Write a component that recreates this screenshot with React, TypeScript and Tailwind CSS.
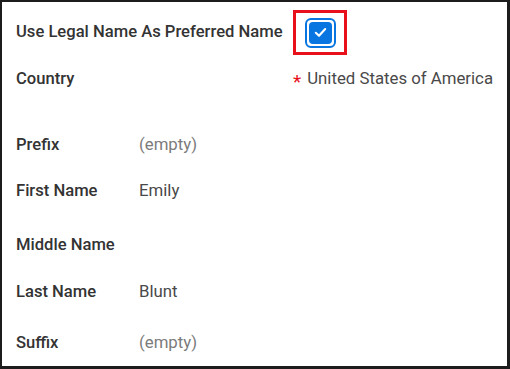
import React from 'react';

// Legal name form (read-only view with "use as preferred" checkbox)

const labelCls = "text-[16.6px] font-medium text-[#333333]";
const valueCls = "text-[16.8px] text-[#494949]";
const emptyCls = "text-[16.8px] text-[#7b7b7b]";

const fields = [
  { label: 'Prefix', value: '(empty)', empty: true, mt: 'mt-[34px]' },
  { label: 'First Name', value: 'Emily', empty: false, mt: 'mt-[14px]' },
  { label: 'Middle Name', value: '', empty: false, mt: 'mt-[22px]' },
  { label: 'Last Name', value: 'Blunt', empty: false, mt: 'mt-[15px]' },
  { label: 'Suffix', value: '(empty)', empty: true, mt: 'mt-[19px]' },
];

const CheckBox = () => (
  <div className="w-[54px] h-[45px] border-[3px] border-[#e8101a] flex items-center justify-center">
    <div className="w-[31px] h-[30px] rounded-[6px] border-2 border-[#0875e1] p-[2px] bg-white">
      <div className="w-full h-full rounded-[4px] bg-[#0875e1] flex items-center justify-center">
        <svg width="13" height="11" viewBox="0 0 13 11" fill="none">
          <path d="M1.8 5.8 L5 8.8 L11.2 2" stroke="white" strokeWidth="2.1" strokeLinecap="round" strokeLinejoin="round" />
        </svg>
      </div>
    </div>
  </div>
);

export default function App() {
  return (
    <div
      className="w-[510px] h-[369px] bg-white border-l-2 border-t-2 border-r-[3px] border-b-[3px] border-[#1c1c1c] overflow-hidden"
      style={{ fontFamily: 'Roboto, "Liberation Sans", sans-serif' }}
    >
      {/* checkbox row */}
      <div className="flex items-center h-[61px] pl-[14px]">
        <div className={`w-[277px] ${labelCls}`}>Use Legal Name As Preferred Name</div>
        <CheckBox />
      </div>

      {/* country row */}
      <div className="flex items-center h-[32px] pl-[14px]">
        <div className={`w-[277px] ${labelCls}`}>Country</div>
        <div className="flex items-center">
          <span className="text-[#e8101a] text-[19px] leading-none mr-[6px] mt-[4px]">*</span>
          <span className={valueCls}>United States of America</span>
        </div>
      </div>

      {fields.map((f) => (
        <div key={f.label} className={`flex items-center h-[32px] pl-[14px] ${f.mt}`}>
          <div className={`w-[123px] ${labelCls}`}>{f.label}</div>
          <div className={f.empty ? emptyCls : valueCls}>{f.value}</div>
        </div>
      ))}
    </div>
  );
}
